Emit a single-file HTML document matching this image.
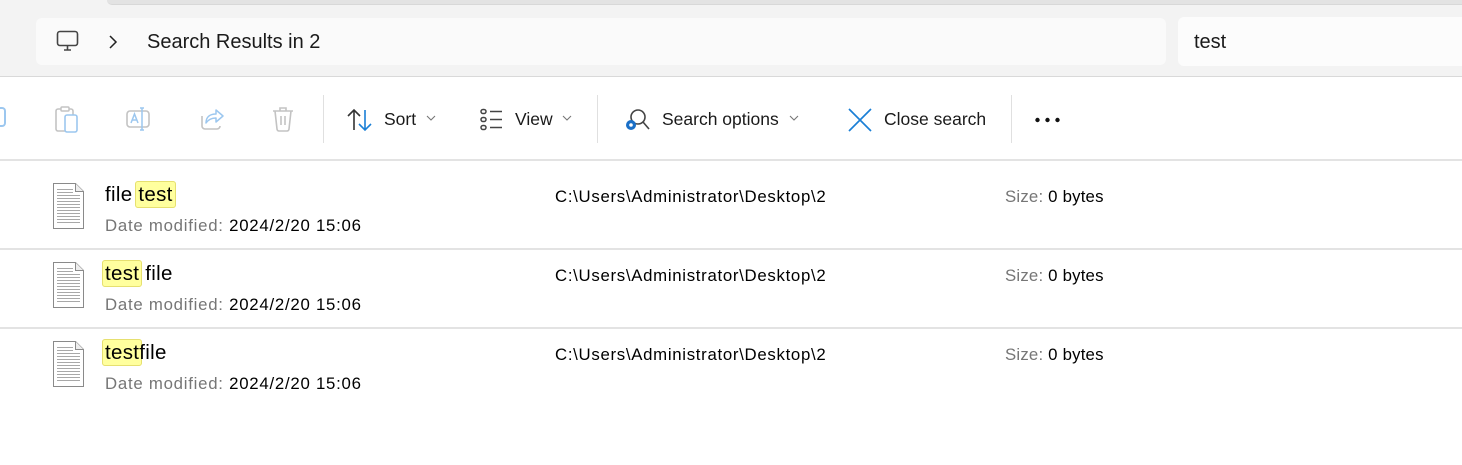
<!DOCTYPE html>
<html><head><meta charset="utf-8"><style>
*{margin:0;padding:0;box-sizing:border-box}
body{width:1462px;height:465px;overflow:hidden;background:#fff;font-family:"Liberation Sans",sans-serif;color:#1a1a1a;position:relative}
.a{position:absolute}
.hl{background:#ffff9e;border:1px solid #e6e070;border-radius:3px;padding:1px 2px;margin:0 -3px}
.t{font-size:20.5px;color:#000;white-space:nowrap;letter-spacing:0.3px}
.d{font-size:16.8px;color:#767676;white-space:nowrap;letter-spacing:0.75px}
.d b{font-weight:normal;color:#000}
.s{letter-spacing:0.2px}
.p{font-size:16.8px;color:#000;white-space:nowrap;letter-spacing:0.7px}
.lbl{font-size:17.5px;color:#1a1a1a;white-space:nowrap}
</style></head><body>
<div class="a" style="left:0;top:0;width:1462px;height:77px;background:#f3f3f3"></div>
<div class="a" style="left:107px;top:0;width:1355px;height:5px;background:#e3e3e3;border-radius:0 0 0 6px;border-bottom:1px solid #d8d8d8"></div>
<div class="a" style="left:36px;top:18px;width:1130px;height:47px;background:#fafafa;border-radius:6px"></div>
<div class="a" style="left:1178px;top:17px;width:290px;height:49px;background:#fcfcfc;border-radius:6px"></div>
<div class="a" style="left:0;top:76px;width:1462px;height:1px;background:#d9d9d9"></div>
<svg class="a" style="left:56px;top:30px" width="24" height="22" viewBox="0 0 24 22"><rect x="1.5" y="1.5" width="20" height="14" rx="2.5" fill="none" stroke="#444" stroke-width="1.6"/><path d="M8 20h7M11.5 16v4" stroke="#444" stroke-width="1.6"/></svg>
<svg class="a" style="left:108px;top:35px" width="10" height="14" viewBox="0 0 10 14"><path d="M2 1l6 6-6 6" fill="none" stroke="#222" stroke-width="1.5"/></svg>
<div class="a" style="left:147px;top:31px;font-size:20px;color:#1a1a1a">Search Results in 2</div>
<div class="a" style="left:1194px;top:31px;font-size:20px;color:#1a1a1a">test</div>
<!-- toolbar -->
<div class="a" style="left:0;top:107px;width:6px;height:20px;border:2px solid #9cc7ef;border-left:none;border-radius:0 4px 4px 0"></div>
<svg class="a" style="left:55px;top:106px" width="26" height="28" viewBox="0 0 26 28"><rect x="1" y="3" width="17" height="22" rx="2" fill="none" stroke="#c3c3c3" stroke-width="1.6"/><rect x="6" y="1" width="8" height="4" rx="1" fill="#fff" stroke="#c3c3c3" stroke-width="1.5"/><rect x="10" y="9" width="12" height="17" rx="2" fill="#fff" stroke="#9cc7ef" stroke-width="1.6"/></svg>
<svg class="a" style="left:125px;top:106px" width="28" height="26" viewBox="0 0 28 26"><rect x="2" y="5" width="22" height="16" rx="3" fill="none" stroke="#c3c3c3" stroke-width="1.6"/><path d="M6 17l3.5-9 3.5 9M7.3 14h4.5" fill="none" stroke="#9cc7ef" stroke-width="1.5"/><path d="M15 2h4M17 2v22M15 24h4" stroke="#9cc7ef" stroke-width="1.5" fill="none"/></svg>
<svg class="a" style="left:199px;top:106px" width="26" height="26" viewBox="0 0 26 26"><path d="M3 10v10a3 3 0 0 0 3 3h12a3 3 0 0 0 3-3" fill="none" stroke="#c3c3c3" stroke-width="1.6"/><path d="M7 17c0-6 4-9 10-9V4l7 6-7 6v-4c-5 0-8 2-10 5z" fill="none" stroke="#9cc7ef" stroke-width="1.5" stroke-linejoin="round"/></svg>
<svg class="a" style="left:272px;top:106px" width="22" height="26" viewBox="0 0 22 26"><path d="M1 5h20M8 5V2h6v3M3 5l2 18a2 2 0 0 0 2 2h8a2 2 0 0 0 2-2l2-18M9 10v9M13 10v9" fill="none" stroke="#c3c3c3" stroke-width="1.6"/></svg>
<div class="a" style="left:323px;top:95px;width:1px;height:48px;background:#e0e0e0"></div>
<svg class="a" style="left:347px;top:108px" width="28" height="24" viewBox="0 0 28 24"><path d="M7 22V2M1 8l6-6 6 6" fill="none" stroke="#333" stroke-width="1.6"/><path d="M18 2v20M12 16l6 6 6-6" fill="none" stroke="#1a7fd6" stroke-width="1.6"/></svg>
<div class="a lbl" style="left:384px;top:109px">Sort</div>
<svg class="a" style="left:426px;top:115px" width="10" height="7"><path d="M1 1l4 4 4-4" fill="none" stroke="#777" stroke-width="1.1"/></svg>
<svg class="a" style="left:480px;top:108px" width="24" height="24" viewBox="0 0 24 24"><g fill="none" stroke="#444" stroke-width="1.5"><rect x="1" y="1.5" width="5" height="4" rx="2"/><rect x="1" y="9.5" width="5" height="4" rx="2"/><rect x="1" y="17.5" width="5" height="4" rx="2"/><path d="M10 3.5h12M10 11.5h12M10 19.5h12"/></g></svg>
<div class="a lbl" style="left:515px;top:109px">View</div>
<svg class="a" style="left:562px;top:115px" width="10" height="7"><path d="M1 1l4 4 4-4" fill="none" stroke="#777" stroke-width="1.1"/></svg>
<div class="a" style="left:597px;top:95px;width:1px;height:48px;background:#e0e0e0"></div>
<svg class="a" style="left:624px;top:107px" width="28" height="26" viewBox="0 0 28 26"><circle cx="14" cy="10" r="7" fill="none" stroke="#444" stroke-width="1.6"/><path d="M19 15l6 7" stroke="#444" stroke-width="1.6"/><circle cx="7" cy="18" r="5" fill="#1a6fc7"/><circle cx="7" cy="18" r="1.8" fill="#fff"/></svg>
<div class="a lbl" style="left:662px;top:109px">Search options</div>
<svg class="a" style="left:789px;top:115px" width="10" height="7"><path d="M1 1l4 4 4-4" fill="none" stroke="#777" stroke-width="1.1"/></svg>
<svg class="a" style="left:848px;top:108px" width="24" height="24" viewBox="0 0 24 24"><path d="M1 1l22 22M23 1L1 23" stroke="#1a7fd6" stroke-width="1.7"/></svg>
<div class="a lbl" style="left:884px;top:109px">Close search</div>
<div class="a" style="left:1011px;top:95px;width:1px;height:48px;background:#e0e0e0"></div>
<svg class="a" style="left:1034px;top:116px" width="28" height="8"><circle cx="3.5" cy="4" r="2.2" fill="#111"/><circle cx="13.5" cy="4" r="2.2" fill="#111"/><circle cx="23.5" cy="4" r="2.2" fill="#111"/></svg>
<div class="a" style="left:0;top:159px;width:1462px;height:2px;background:#e3e3e3"></div>
<!-- rows -->
<svg width="0" height="0" style="position:absolute"><defs><g id="fi"><path d="M0.5 0.5h22l8 8v37h-30z" fill="#fff" stroke="#8a8a8a"/><path d="M22.5 0.5v8h8" fill="#eee" stroke="#8a8a8a"/><g stroke="#a8a8a8"><path d="M4 6.5h16M4 9.5h16M4 12.5h23M4 15.5h23M4 18.5h23M4 21.5h23M4 24.5h23M4 27.5h23M4 30.5h23M4 33.5h23M4 36.5h23M4 39.5h23"/></g></g></defs></svg>
<svg class="a" style="left:53px;top:183px" width="32" height="47"><use href="#fi"/></svg>
<div class="a t" style="left:105px;top:183px">file <span class="hl">test</span></div>
<div class="a d" style="left:105px;top:216px">Date modified: <b>2024/2/20 15:06</b></div>
<div class="a p" style="left:555px;top:187px">C:\Users\Administrator\Desktop\2</div>
<div class="a d s" style="left:1005px;top:187px">Size: <b>0 bytes</b></div>
<div class="a" style="left:0;top:248px;width:1462px;height:2px;background:#e3e3e3"></div>
<svg class="a" style="left:53px;top:262px" width="32" height="47"><use href="#fi"/></svg>
<div class="a t" style="left:105px;top:262px"><span class="hl">test</span> file</div>
<div class="a d" style="left:105px;top:295px">Date modified: <b>2024/2/20 15:06</b></div>
<div class="a p" style="left:555px;top:266px">C:\Users\Administrator\Desktop\2</div>
<div class="a d s" style="left:1005px;top:266px">Size: <b>0 bytes</b></div>
<div class="a" style="left:0;top:327px;width:1462px;height:2px;background:#e3e3e3"></div>
<svg class="a" style="left:53px;top:341px" width="32" height="47"><use href="#fi"/></svg>
<div class="a t" style="left:105px;top:341px"><span class="hl">test</span>file</div>
<div class="a d" style="left:105px;top:374px">Date modified: <b>2024/2/20 15:06</b></div>
<div class="a p" style="left:555px;top:345px">C:\Users\Administrator\Desktop\2</div>
<div class="a d s" style="left:1005px;top:345px">Size: <b>0 bytes</b></div>
</body></html>
